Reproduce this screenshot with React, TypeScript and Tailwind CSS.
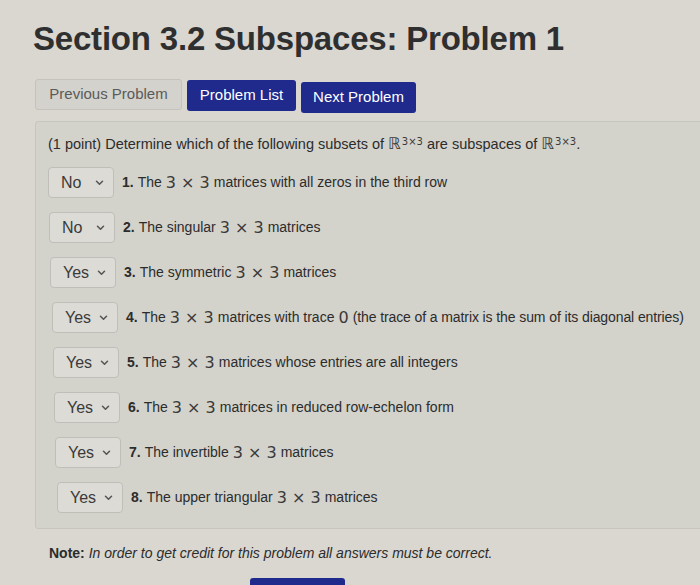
import React from "react";

const rows = [
  { n: 1, ans: "No", pre: "The", post: "matrices with all zeros in the third row", shift: "ml-0" },
  { n: 2, ans: "No", pre: "The singular", post: "matrices", shift: "ml-[1px]" },
  { n: 3, ans: "Yes", pre: "The symmetric", post: "matrices", shift: "ml-[2px]" },
  {
    n: 4,
    ans: "Yes",
    pre: "The",
    post: "matrices with trace",
    tail: true,
    shift: "ml-[4px]",
  },
  { n: 5, ans: "Yes", pre: "The", post: "matrices whose entries are all integers", shift: "ml-[5px]" },
  { n: 6, ans: "Yes", pre: "The", post: "matrices in reduced row-echelon form", shift: "ml-[6px]" },
  { n: 7, ans: "Yes", pre: "The invertible", post: "matrices", shift: "ml-[7px]" },
  { n: 8, ans: "Yes", pre: "The upper triangular", post: "matrices", shift: "ml-[9px]" },
];

const Chevron = () => (
  <svg width="9" height="6" viewBox="0 0 10 7" fill="none">
    <path d="M1.5 1.5 L5 5 L8.5 1.5" stroke="#555" strokeWidth="1.8" strokeLinecap="round" strokeLinejoin="round" />
  </svg>
);

const Math3x3 = () => (
  <span className="mx-[4px] text-[16px] text-[#3a3a3a] font-['DejaVu_Sans',sans-serif]">
    3 × 3
  </span>
);

const RR = () => (
  <span className="font-['DejaVu_Sans',sans-serif] text-[16px] text-[#3a3a3a]">
    ℝ<sup className="text-[10px] relative -top-[4px] ml-[1px]">3×3</sup>
  </span>
);

export default function App() {
  return (
    <div className="w-[700px] h-[585px] overflow-hidden bg-[#d9d7d0] font-['Liberation_Sans',Arial,sans-serif] text-[#2c2c2c]">
      <h1 className="pt-[19px] pl-[33px] text-[33px] font-bold leading-[40px] tracking-[-0.2px] text-[#2f2f30]">
        Section 3.2 Subspaces: Problem 1
      </h1>

      {/* nav buttons */}
      <div className="mt-[20px] ml-[35px] flex items-start gap-[5px]">
        <div className="h-[31px] w-[147px] flex items-center justify-center rounded-[3px] border border-[#c3c2bc] bg-[#d3d2cc] text-[15px] text-[#5a5a5a]">
          Previous Problem
        </div>
        <div className="mt-[1px] h-[31px] w-[109px] flex items-center justify-center rounded-[3px] bg-[#1f2a8c] text-[15px] text-white">
          Problem List
        </div>
        <div className="mt-[3px] h-[31px] w-[115px] flex items-center justify-center rounded-[3px] bg-[#1f2a8c] text-[15px] text-white">
          Next Problem
        </div>
      </div>

      {/* problem panel */}
      <div className="mt-[8px] ml-[35px] w-[700px] h-[408px] border border-[#c6c5be] rounded-l-[3px] bg-[#d3d2cb] pl-[12px] pt-[11px]">
        <p className="text-[14.5px] leading-[22px]">
          (1 point) Determine which of the following subsets of <RR /> are subspaces of <RR />.
        </p>

        <div className="mt-[12px] flex flex-col gap-[14px]">
          {rows.map((r) => (
            <div key={r.n} className={`flex items-center ${r.shift}`}>
              <div className="h-[31px] w-[66px] shrink-0 flex items-center justify-between pl-[12px] pr-[9px] rounded-[4px] border border-[#bfbeb8] bg-[#dcdbd5] text-[16px] text-[#3a3a3a]">
                <span>{r.ans}</span>
                <Chevron />
              </div>
              <div className="ml-[8px] flex items-center whitespace-nowrap text-[14px]">
                <span className="font-bold mr-[4px]">{r.n}.</span>
                <span>{r.pre}</span>
                <Math3x3 />
                <span>{r.post}</span>
                {r.tail && (
                  <>
                    <span className="mx-[4px] text-[16px] font-['DejaVu_Sans',sans-serif] text-[#3a3a3a]">0</span>
                    <span className="tracking-[-0.1px]">(the trace of a matrix is the sum of its diagonal entries)</span>
                  </>
                )}
              </div>
            </div>
          ))}
        </div>
      </div>

      {/* note */}
      <p className="mt-[14px] ml-[49px] text-[14px] text-[#2c2c2c]">
        <span className="font-bold">Note:</span>{" "}
        <em>In order to get credit for this problem all answers must be correct.</em>
      </p>

      <div className="mt-[14px] ml-[250px] h-[10px] w-[95px] rounded-t-[3px] bg-[#1f2a8c]" />
    </div>
  );
}
